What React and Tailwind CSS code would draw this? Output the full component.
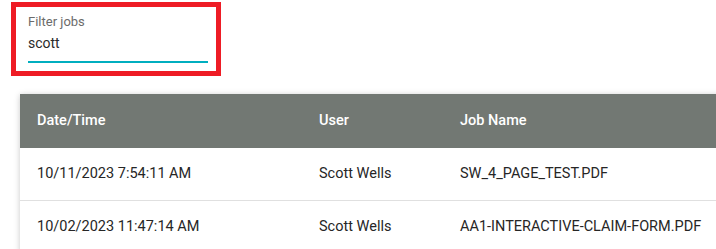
import React from "react";

const rows = [
  ["10/11/2023 7:54:11 AM", "Scott Wells", "SW_4_PAGE_TEST.PDF"],
  ["10/02/2023 11:47:14 AM", "Scott Wells", "AA1-INTERACTIVE-CLAIM-FORM.PDF"],
];

export default function App() {
  return (
    <div className="w-[716px] h-[249px] overflow-hidden bg-white relative" style={{ fontFamily: "Roboto, 'Liberation Sans', sans-serif" }}>
      <div className="ml-[11px] mt-[2px] w-[210px] h-[74px] border-[5px] border-[#ee1c25] pl-[12px] pr-[8px] pt-[7px]">
        <div className="text-[13px] leading-[15px] text-[#6b6b6b]">Filter jobs</div>
        <div className="text-[14px] leading-[17px] text-[#2a2a2a] mt-[6px]">scott</div>
        <div className="h-[2px] bg-[#00aebf] mt-[9px] w-[180px]"></div>
      </div>
      <div className="ml-[20px] mt-[18px] w-[740px] bg-white shadow-[0_1px_6px_rgba(0,0,0,0.22)]">
        <div className="grid grid-cols-[282px_141px_1fr] h-[54px] bg-[#727873] items-center text-white text-[14.5px] font-medium">
          <div className="pl-[17px]">Date/Time</div>
          <div className="pl-[17px]">User</div>
          <div className="pl-[17px]">Job Name</div>
        </div>
        {rows.map((r, i) => (
          <div key={i} className="grid grid-cols-[282px_141px_1fr] h-[53px] items-center text-[14.5px] text-[#262626] border-b border-[#e0e0e0]">
            <div className="pl-[17px]">{r[0]}</div>
            <div className="pl-[17px]">{r[1]}</div>
            <div className="pl-[17px]">{r[2]}</div>
          </div>
        ))}
      </div>
    </div>
  );
}
